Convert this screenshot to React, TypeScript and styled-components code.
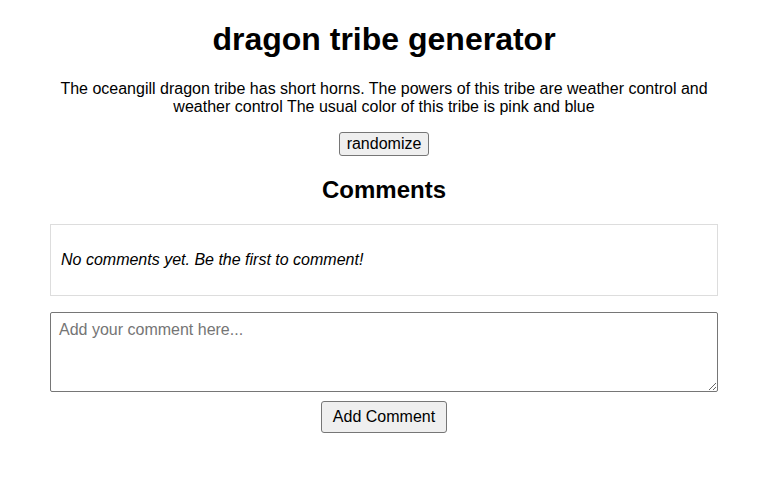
import React from "react";
import styled, { createGlobalStyle } from "styled-components";

const GlobalStyle = createGlobalStyle`
  body {
    margin: 8px;
    font-family: "Liberation Sans", Arial, sans-serif;
    color: #000;
    background: #fff;
  }
`;

const Page = styled.div`
  text-align: center;
`;

const Title = styled.h1`
  font-size: 32px;
  font-weight: bold;
  margin: 13.44px 0 21.44px;
  line-height: 37px;
`;

const Description = styled.p`
  font-size: 16px;
  line-height: 18px;
  margin: 16px 50px;
`;

const ButtonRow = styled.div`
  display: flex;
  justify-content: center;
`;

const NativeButton = styled.button<{ $large?: boolean }>`
  font-family: "Liberation Sans", Arial, sans-serif;
  font-size: 16px;
  line-height: 18px;
  color: #000;
  background: #efefef;
  border: 1px solid #767676;
  border-radius: 3px;
  padding: ${(p) => (p.$large ? "6px 11px" : "2px 7px")};
  cursor: pointer;
`;

const SectionTitle = styled.h2`
  font-size: 24px;
  font-weight: bold;
  line-height: 28px;
  margin: 19.92px 0;
`;

const CommentsSection = styled.section`
  margin: 0 42px;
  text-align: left;
`;

const CommentsBox = styled.div`
  border: 1px solid #dddddd;
  padding: 10px;
`;

const EmptyNote = styled.p`
  font-style: italic;
  font-size: 16px;
  line-height: 18px;
  margin: 16px 0;
`;

const CommentForm = styled.form`
  margin-top: 16px;
  display: flex;
  flex-direction: column;
  align-items: center;
  gap: 9px;
`;

const CommentInput = styled.textarea`
  width: 100%;
  box-sizing: border-box;
  height: 80px;
  padding: 8px;
  font-family: "Liberation Sans", Arial, sans-serif;
  font-size: 16px;
  line-height: 18px;
  border: 1px solid #767676;
  border-radius: 2px;
  &::placeholder {
    color: #757575;
  }
`;

export default function App() {
  return (
    <Page>
      <GlobalStyle />
      <Title>dragon tribe generator</Title>
      <Description>
        The oceangill dragon tribe has short horns. The powers of this tribe are
        weather control and weather control The usual color of this tribe is
        pink and blue
      </Description>
      <ButtonRow>
        <NativeButton type="button">randomize</NativeButton>
      </ButtonRow>
      <SectionTitle>Comments</SectionTitle>
      <CommentsSection>
        <CommentsBox>
          <EmptyNote>No comments yet. Be the first to comment!</EmptyNote>
        </CommentsBox>
        <CommentForm onSubmit={(e) => e.preventDefault()}>
          <CommentInput placeholder="Add your comment here..." />
          <NativeButton type="submit" $large>
            Add Comment
          </NativeButton>
        </CommentForm>
      </CommentsSection>
    </Page>
  );
}
